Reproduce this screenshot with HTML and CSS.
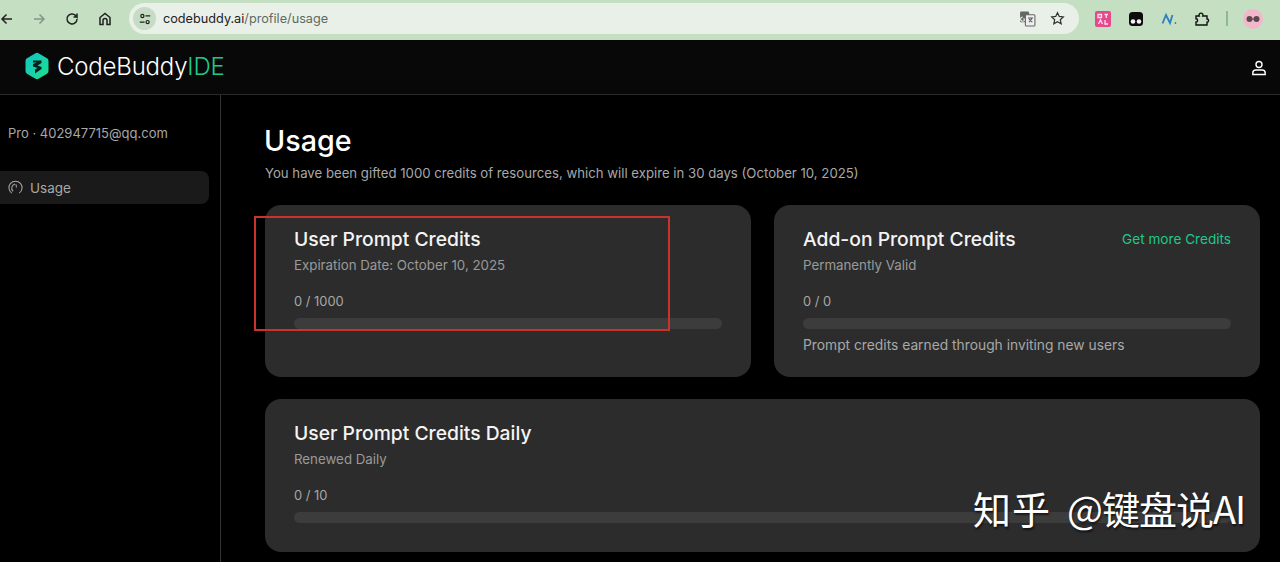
FILE: index.html
```html
<!DOCTYPE html>
<html lang="en">
<head>
<meta charset="utf-8">
<title>Usage</title>
<link rel="stylesheet" href="styles.css">
</head>
<body>
<div class="chrome">
  <svg class="nav-ic back" viewBox="0 0 16 16"><path d="M13 8H3M7.500 3.500 3 8l4.500 4.500"/></svg>
  <svg class="nav-ic fwd" viewBox="0 0 16 16"><path d="M3 8h10M8.500 3.500 13 8l-4.500 4.500"/></svg>
  <svg class="nav-ic reload" viewBox="0 0 16 16"><path d="M13 8a5 5 0 1 1-1.500-3.600L13 6V2.500M13 6H9.500"/></svg>
  <svg class="nav-ic home" viewBox="0 0 16 16"><path d="M3 13.500V6.500L8 2.500l5 4v7h-3V9.500a2 2 0 0 0-4 0v4z"/></svg>
  <div class="omnibox">
    <span class="tune"><svg viewBox="0 0 16 16"><circle cx="5" cy="4.500" r="1.800"/><path d="M8.500 4.500H14M2 11.500h5.500"/><circle cx="11" cy="11.500" r="1.800"/></svg></span>
    <span class="url"><span class="host">codebuddy.ai</span>/profile/usage</span>
    <svg class="translate" viewBox="0 0 16 16"><path d="M1 2.500a1 1 0 0 1 1-1h7l1 3v7H2a1 1 0 0 1-1-1z" class="tr-back"/><path d="M3.500 6.500a2 2 0 1 0 2 2H3.800" class="tr-g"/><rect x="6" y="4.500" width="9" height="10.500" rx="1" class="tr-front"/><path d="M8.500 7.500h4l-3 4M9.500 8.500l3 3" class="tr-mark"/></svg>
    <svg class="star" viewBox="0 0 16 16"><path d="m8 1.800 1.900 4 4.300.5-3.200 3 .9 4.300L8 11.500l-3.900 2.100.9-4.300-3.200-3 4.300-.5z"/></svg>
  </div>
  <div class="exts">
    <svg class="ext-pink" viewBox="0 0 16 16"><rect width="16" height="16" rx="2" fill="#e4498b"/><path d="M3 3.500h3.500v3H3zM9.500 3.500h3.500M11.300 3.500v3.500M3.500 13l2-4 2 4M10 9v4h3" fill="none" stroke="#fbe3ee" stroke-width="1.300"/></svg>
    <svg class="ext-svg" viewBox="0 0 16 16"><rect x="1" y="1" width="14" height="14" rx="3.500" fill="#0c0c0c"/><circle cx="5" cy="10.500" r="2.300" fill="#f3f3f3"/><circle cx="11" cy="10.500" r="2.300" fill="#f3f3f3"/></svg>
    <svg class="ext-svg" viewBox="0 0 16 16"><path d="M1.500 12.500 5 4l4 8 2.500-8" fill="none" stroke="#2f7fc0" stroke-width="1.800"/><circle cx="14.500" cy="12" r=".8" fill="#26415c"/></svg>
    <svg class="ext-svg puzzle" viewBox="0 0 16 16"><path d="M2 5h3.200a2 2 0 1 1 3.600 0H13v3a1.600 1.600 0 0 1 0 3.200V14H2v-3a1.600 1.600 0 0 0 0-3.200z"/></svg>
    <span class="sep"></span>
    <span class="avatar"><svg viewBox="0 0 18 18"><circle cx="5.500" cy="9" r="3" fill="#5a4a50"/><circle cx="12.500" cy="9" r="3" fill="#5a4a50"/><path d="M8 9h2" stroke="#5a4a50"/></svg></span>
  </div>
</div>

<header class="top">
  <div class="brand">
    <svg class="logo" viewBox="0 0 24 28"><defs><linearGradient id="lg" x1="0" y1="0" x2="1" y2="1"><stop offset="0" stop-color="#10c4c8"/><stop offset="1" stop-color="#1fe08a"/></linearGradient></defs><path d="M10.500 1.300a3 3 0 0 1 3 0l8.500 5a3 3 0 0 1 1.500 2.600v10.200a3 3 0 0 1-1.500 2.600l-8.500 5a3 3 0 0 1-3 0l-8.500-5A3 3 0 0 1 .5 19.100V8.900A3 3 0 0 1 2 6.300z" fill="url(#lg)"/><path d="M8 8.500h8.500v2.500L12.500 13.500l4 1.500v2L10 21.500v-4l2.500-1.500L8 14.500v-2.500l4-1.500H8z" fill="#06201d"/></svg>
    <span class="brand-name">CodeBuddy</span><span class="brand-ide">IDE</span>
  </div>
  <svg class="user" viewBox="0 0 16 16"><circle cx="8" cy="4.500" r="3"/><path d="M1.800 14.500v-1.500a3 3 0 0 1 3-3h6.400a3 3 0 0 1 3 3v1.500z"/></svg>
</header>

<div class="body">
  <aside class="side">
    <div class="account">Pro · 402947715@qq.com</div>
    <div class="side-item">
      <svg viewBox="0 0 16 16"><path d="M4 14a7 7 0 1 1 8 0"/><path d="M5.500 12a4.500 4.500 0 0 1 2-7.800M8.500 4.500 9 8"/></svg>
      <span>Usage</span>
    </div>
  </aside>
  <main class="main">
    <h1>Usage</h1>
    <p class="lead">You have been gifted 1000 credits of resources, which will expire in 30 days (October 10, 2025)</p>
    <div class="grid">
      <section class="card">
        <h2>User Prompt Credits</h2>
        <div class="sub">Expiration Date: October 10, 2025</div>
        <div class="count">0 / 1000</div>
        <div class="bar"></div>
      </section>
      <section class="card">
        <div class="card-head"><h2>Add-on Prompt Credits</h2><a class="more">Get more Credits</a></div>
        <div class="sub">Permanently Valid</div>
        <div class="count">0 / 0</div>
        <div class="bar"></div>
        <div class="note">Prompt credits earned through inviting new users</div>
      </section>
      <section class="card wide">
        <h2>User Prompt Credits Daily</h2>
        <div class="sub">Renewed Daily</div>
        <div class="count">0 / 10</div>
        <div class="bar"></div>
      </section>
    </div>
  </main>
</div>

<div class="redbox"></div>
<div class="mark"><span class="mark-a">知乎</span><span class="mark-b">@键盘说AI</span></div>
</body>
</html>
```
FILE: styles.css
```css
* { box-sizing: border-box; }
html, body { margin: 0; height: 562px; overflow: hidden; }
body { background: #000; font-family: "Inter", "Liberation Sans", sans-serif; color: #fff; position: relative; }

.chrome { height: 40px; background: #c5dfc2; display: flex; align-items: center; padding-bottom: 3px; position: relative; }
.nav-ic { width: 16px; height: 16px; fill: none; stroke: #222; stroke-width: 1.500; flex: none; }
.back { margin-left: -1px; }
.fwd { margin-left: 16px; stroke: #84968a; }
.reload { margin-left: 17px; }
.home { margin-left: 17px; }
.omnibox { margin-left: 16px; width: 950px; height: 31px; background: #e9f0e8; border-radius: 16px; display: flex; align-items: center; padding: 0 14px 0 4px; flex: none; }
.tune { width: 23px; height: 23px; border-radius: 50%; background: #c7dcc5; display: flex; align-items: center; justify-content: center; flex: none; }
.tune svg { width: 14px; height: 14px; fill: none; stroke: #222; stroke-width: 1.400; }
.url { margin-left: 7px; font-size: 12.700px; color: #5f6a62; flex: 1; }
.host { color: #1d221e; }
.translate { width: 17px; height: 17px; flex: none; margin-right: 14px; }
.tr-back { fill: #666; }
.tr-g { fill: none; stroke: #eee; }
.tr-front { fill: #eee; stroke: #666; }
.tr-mark { fill: none; stroke: #555; }
.star { width: 15px; height: 15px; fill: none; stroke: #333; stroke-width: 1.300; flex: none; }
.exts { display: flex; align-items: center; margin-left: 16px; }
.ext-pink { width: 16px; height: 16px; flex: none; }
.ext-svg { width: 16px; height: 16px; margin-left: 17px; flex: none; }
.puzzle { fill: none; stroke: #111; stroke-width: 1.400; }
.sep { width: 2px; height: 15px; background: #8db991; margin-left: 16px; }
.avatar { width: 20px; height: 20px; border-radius: 50%; background: #f3b7cb; margin-left: 15px; display: flex; align-items: center; justify-content: center; }
.avatar svg { width: 18px; height: 18px; }

.top { height: 55px; background: #080808; border-bottom: 1px solid #2a2a2a; display: flex; align-items: center; justify-content: space-between; padding: 0 13px 2px 25px; }
.brand { display: flex; align-items: center; font-size: 24px; font-weight: 300; letter-spacing: -.2px; }
.logo { width: 24px; height: 28px; margin-right: 8px; }
.brand-ide { color: #1fc98a; }
.user { width: 16px; height: 16px; fill: none; stroke: #fff; stroke-width: 1.400; margin-top: 3px; }

.body { display: flex; height: 467px; }
.side { width: 221px; flex: none; border-right: 1px solid #333; padding-top: 29px; }
.account { padding-left: 8px; font-size: 13px; line-height: 18px; color: #a8a8a8; }
.side-item { margin-top: 29px; width: 209px; height: 33px; background: #1a1a1a; border-radius: 0 8px 8px 0; display: flex; align-items: center; padding-left: 8px; font-size: 13.500px; color: #a8a8a8; }
.side-item svg { width: 15px; height: 15px; fill: none; stroke: #a8a8a8; stroke-width: 1.100; margin-right: 7px; }

.main { flex: 1; padding: 29px 20px 0 44px; }
h1 { margin: 0 0 0 -1px; font-size: 28.700px; line-height: 34px; font-weight: 500; }
.lead { margin: 5px 0 0; font-size: 13.200px; line-height: 20px; color: #a8a8a8; }
.grid { margin-top: 22px; display: grid; grid-template-columns: 486px 486px; column-gap: 23px; row-gap: 22px; grid-template-rows: 172px 153px; }
.card { background: #2c2c2c; border-radius: 16px; padding: 22px 29px 0; }
.wide { grid-column: 1 / 3; }
.card-head { display: flex; justify-content: space-between; align-items: center; }
h2 { margin: 0; font-size: 19.300px; line-height: 24px; font-weight: 500; color: #f4f4f4; }
.more { font-size: 13.600px; color: #1fc98a; }
.sub { margin-top: 5px; font-size: 13.300px; line-height: 18px; color: #9a9a9a; }
.count { margin-top: 19px; font-size: 12.900px; line-height: 18px; color: #a8a8a8; }
.bar { margin-top: 7px; height: 11px; border-radius: 6px; background: #3c3c3c; }
.note { margin-top: 7px; font-size: 13.800px; line-height: 18px; color: #a8a8a8; }

.redbox { position: absolute; left: 254px; top: 216px; width: 416px; height: 115px; border: 2px solid #c8332a; }
.mark { position: absolute; left: 973px; top: 484px; display: flex; gap: 16px; font-family: "Noto Sans CJK SC", sans-serif; font-size: 38px; line-height: 48px; color: #fff; text-shadow: 1px 2px 2px rgba(0,0,0,.6); white-space: nowrap; }
.mark-a { letter-spacing: 1px; }
.mark-b { letter-spacing: -1px; }
```
